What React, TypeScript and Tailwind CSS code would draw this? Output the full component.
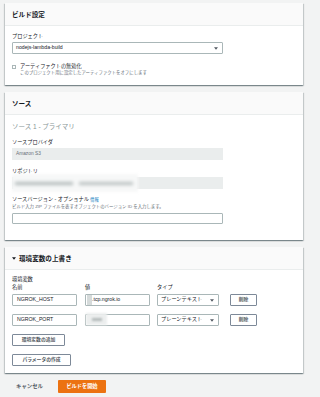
import React from 'react';

const panel =
  'bg-white shadow-[0_1px_1px_0_rgba(0,28,36,0.3),1px_1px_1px_0_rgba(0,28,36,0.15),-1px_1px_1px_0_rgba(0,28,36,0.15)]';

function PanelHeader({ children }: { children: React.ReactNode }) {
  return (
    <div className="h-[23px] bg-[#fafafa] border-b border-[#eaeded] flex items-center px-[7px]">
      <h2 className="text-[6.6px] leading-[9px] font-bold text-[#16191f] flex items-center gap-[3px]">
        {children}
      </h2>
    </div>
  );
}

function Caret({ className = '' }: { className?: string }) {
  return (
    <svg viewBox="0 0 6 4" className={className}>
      <path d="M0 0h6L3 4z" fill="currentColor" />
    </svg>
  );
}

function Label({ children, className = '' }: { children: React.ReactNode; className?: string }) {
  return <div className={`text-[5.2px] leading-[8px] text-[#16191f] ${className}`}>{children}</div>;
}

function Select({ value, className = '' }: { value: string; className?: string }) {
  return (
    <div
      className={`h-[12px] border border-[#aab7b8] rounded-[1px] bg-white flex items-center justify-between pl-[3px] pr-[4px] ${className}`}
    >
      <span className="text-[5.2px] text-[#16191f]">{value}</span>
      <Caret className="w-[4px] h-[3px] text-[#545b64]" />
    </div>
  );
}

function Button({ children, className = '' }: { children: React.ReactNode; className?: string }) {
  return (
    <div
      className={`h-[12px] border border-[#7d8998] rounded-[1px] bg-white flex items-center justify-center text-[4.8px] font-bold text-[#545b64] ${className}`}
    >
      {children}
    </div>
  );
}

export default function App() {
  return (
    <div className="w-[320px] h-[397px] overflow-hidden bg-[#f2f3f3] pt-[3px] pl-[5px] pr-[17px] font-['Liberation_Sans','Noto_Sans_CJK_JP',sans-serif]">
      {/* ビルド設定 */}
      <section className={panel}>
        <PanelHeader>ビルド設定</PanelHeader>
        <div className="px-[7px] pt-[6px] pb-[10px]">
          <Label>プロジェクト</Label>
          <Select value="nodejs-lambda-build" className="mt-[2px] w-[211px]" />
          <div className="mt-[9px] flex items-start gap-[4px]">
            <div className="mt-[1.5px] w-[4px] h-[4px] border border-[#aab7b8] bg-white shrink-0" />
            <div>
              <div className="text-[5.2px] leading-[7px] text-[#16191f]">アーティファクトの無効化</div>
              <div className="text-[4.4px] leading-[5px] text-[#687078]">
                このプロジェクト用に設定したアーティファクトをオフにします
              </div>
            </div>
          </div>
        </div>
      </section>

      {/* ソース */}
      <section className={`${panel} mt-[7px]`}>
        <PanelHeader>ソース</PanelHeader>
        <div className="px-[7px] pt-[7px] pb-[16px]">
          <div className="text-[6.5px] leading-[9px] text-[#879596]">ソース 1 - プライマリ</div>
          <Label className="mt-[7px]">ソースプロバイダ</Label>
          <div className="mt-[2px] w-[211px] h-[12px] bg-[#eaeded] flex items-center px-[4px] text-[4.8px] text-[#687078]">
            Amazon S3
          </div>
          <Label className="mt-[7px]">リポジトリ</Label>
          <div className="relative mt-[2px] w-[211px] h-[12px] bg-[#eaeded]">
            <div className="absolute -top-[3px] -bottom-[3px] left-0 w-[126px] bg-[#f7f8f8] blur-[1.5px] flex items-center gap-[6px] px-[3px]">
              <div className="h-[3px] w-[58px] bg-[#aeb6b6] blur-[0.8px]" />
              <div className="h-[3px] w-[54px] bg-[#b6bdbd] blur-[0.8px]" />
            </div>
          </div>
          <Label className="mt-[6px]">
            ソースバージョン - オプショナル{' '}
            <span className="text-[4.2px] text-[#0073bb]">情報</span>
          </Label>
          <div className="text-[4.4px] leading-[6px] text-[#687078]">
            ビルド入力 ZIP ファイルを表すオブジェクトのバージョン ID を入力します。
          </div>
          <div className="mt-[3px] w-[211px] h-[11px] border border-[#aab7b8] rounded-[1px] bg-white" />
        </div>
      </section>

      {/* 環境変数の上書き */}
      <section className={`${panel} mt-[7px]`}>
        <PanelHeader>
          <Caret className="w-[4px] h-[3px] text-[#16191f]" />
          環境変数の上書き
        </PanelHeader>
        <div className="px-[7px] pt-[5px] pb-[7px]">
          <div className="text-[5.2px] leading-[8px] text-[#16191f]">環境変数</div>
          <div className="flex text-[5.2px] leading-[8px] text-[#16191f]">
            <div className="w-[73px]">名前</div>
            <div className="w-[72px]">値</div>
            <div>タイプ</div>
          </div>
          <div className="mt-[3px] flex items-center">
            <div className="w-[65px] h-[12px] border border-[#aab7b8] rounded-[1px] flex items-center px-[4px] text-[5.2px] text-[#16191f]">
              NGROK_HOST
            </div>
            <div className="ml-[8px] w-[65px] h-[12px] border border-[#aab7b8] rounded-[1px] flex items-center pl-[1px] text-[5.2px] text-[#16191f]">
              <span className="w-[5px] h-[10px] bg-[#d5dada] blur-[0.6px] shrink-0" />
              <span>.tcp.ngrok.io</span>
            </div>
            <Select value="プレーンテキスト" className="ml-[7px] w-[62px]" />
            <Button className="ml-[11px] w-[27px]">削除</Button>
          </div>
          <div className="mt-[8px] flex items-center">
            <div className="w-[65px] h-[12px] border border-[#aab7b8] rounded-[1px] flex items-center px-[4px] text-[5.2px] text-[#16191f]">
              NGROK_PORT
            </div>
            <div className="relative ml-[8px] w-[65px] h-[12px] border border-[#aab7b8] rounded-[1px] bg-white">
              <div className="absolute left-[0px] -top-[2px] w-[21px] h-[12px] bg-[#eceeee] blur-[1px] flex items-center justify-center">
                <div className="w-[10px] h-[3px] bg-[#b4bbbb] blur-[0.6px]" />
              </div>
            </div>
            <Select value="プレーンテキスト" className="ml-[7px] w-[62px]" />
            <Button className="ml-[11px] w-[27px]">削除</Button>
          </div>
          <Button className="mt-[8px] w-[53px]">環境変数の追加</Button>
          <Button className="mt-[8px] w-[59px]">パラメータの作成</Button>
        </div>
      </section>

      {/* フッター */}
      <div className="mt-[7px] flex items-center pl-[11px]">
        <span className="text-[5.4px] font-bold text-[#545b64]">キャンセル</span>
        <div className="ml-[15px] w-[48px] h-[13px] bg-[#ec7211] rounded-[1px] flex items-center justify-center text-[5.2px] font-bold text-white">
          ビルドを開始
        </div>
      </div>
    </div>
  );
}
